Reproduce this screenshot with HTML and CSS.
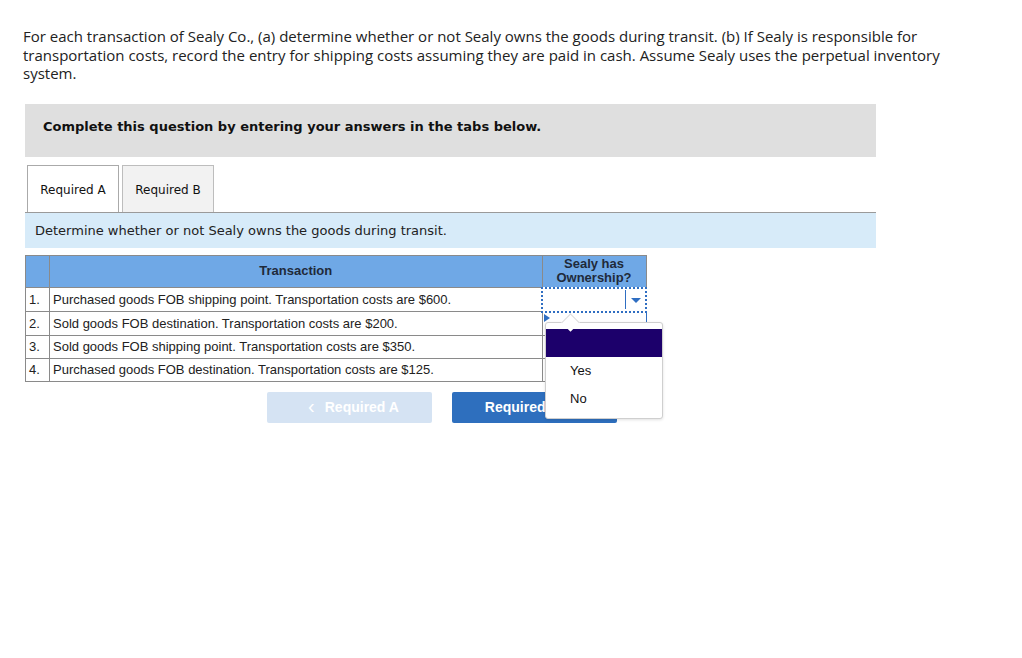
FILE: index.html
```html
<!DOCTYPE html>
<html>
<head>
<meta charset="utf-8">
<link rel="stylesheet" href="styles.css">
</head>
<body>
<p class="intro">For each transaction of Sealy Co., (a) determine whether or not Sealy owns the goods during transit. (b) If Sealy is responsible for transportation costs, record the entry for shipping costs assuming they are paid in cash. Assume Sealy uses the perpetual inventory system.</p>
<div class="wrap">
  <div class="banner">Complete this question by entering your answers in the tabs below.</div>
  <div class="tabs">
    <div class="tab active">Required A</div>
    <div class="tab">Required B</div>
  </div>
  <div class="instr">Determine whether or not Sealy owns the goods during transit.</div>
  <table class="grid">
    <thead>
      <tr><th class="num"></th><th class="desc">Transaction</th><th class="own">Sealy has<br>Ownership?</th></tr>
    </thead>
    <tbody>
      <tr><td class="num">1.</td><td class="desc">Purchased goods FOB shipping point. Transportation costs are $600.</td><td class="own sel focus"><div class="selbox"><span class="selval"></span><span class="selarrow"></span></div></td></tr>
      <tr><td class="num">2.</td><td class="desc">Sold goods FOB destination. Transportation costs are $200.</td><td class="own sel second"><span class="flag"></span></td></tr>
      <tr><td class="num">3.</td><td class="desc">Sold goods FOB shipping point. Transportation costs are $350.</td><td class="own"></td></tr>
      <tr><td class="num">4.</td><td class="desc">Purchased goods FOB destination. Transportation costs are $125.</td><td class="own"></td></tr>
    </tbody>
  </table>
  <div class="nav">
    <div class="btn prev"><span class="chev">&lsaquo;</span> Required A</div>
    <div class="btn next">Required B <span class="chev">&rsaquo;</span></div>
  </div>
</div>
<div class="popup">
  <div class="caret"></div>
  <div class="opt hl"></div>
  <div class="opt">Yes</div>
  <div class="opt">No</div>
</div>
</body>
</html>
```
FILE: styles.css
```css
html, body { margin: 0; padding: 0; background: #fff; }
body { font-family: "Open Sans", "Lato", sans-serif; color: #222; position: relative; width: 1022px; height: 658px; overflow: hidden; }

.intro {
  margin: 27px 0 0 23px;
  width: 925px;
  font-size: 15px;
  line-height: 18.5px;
  color: #222;
}

.wrap { margin: 21px 0 0 25px; width: 851px; }

.banner {
  background: #dfdfdf;
  height: 53px;
  box-sizing: border-box;
  padding: 15px 0 0 18px;
  font-family: "DejaVu Sans", Verdana, sans-serif;
  font-weight: bold;
  font-size: 13px;
  color: #111;
}

.tabs {
  display: flex;
  margin-top: 8px;
  padding-left: 2px;
  border-bottom: 1px solid #9a9a9a;
  height: 47px;
  gap: 3px;
}
.tab {
  width: 92px;
  height: 47px;
  box-sizing: border-box;
  border: 1px solid #bdbdbd;
  border-bottom: none;
  padding-top: 2px;
  background: #f2f2f2;
  font-family: "DejaVu Sans", Verdana, sans-serif;
  font-size: 12px;
  color: #111;
  display: flex;
  align-items: center;
  justify-content: center;
}
.tab.active { background: #fff; border-color: #aaa; }

.instr {
  background: #d7ebf9;
  height: 35px;
  box-sizing: border-box;
  padding: 10px 0 0 10px;
  font-family: "DejaVu Sans", Verdana, sans-serif;
  font-size: 13px;
  color: #222;
}

.grid {
  margin-top: 7px;
  border-collapse: collapse;
  width: 622px;
  font-family: "Liberation Sans", Arial, sans-serif;
  font-size: 13px;
  color: #222;
}
.grid th, .grid td { border: 1px solid #8a8a8a; padding: 0; }
.grid th {
  background: #6fa8e6;
  height: 31px;
  font-weight: bold;
  font-size: 13px;
  color: #1f2a3a;
  line-height: 14px;
}
.grid td { height: 22px; }
.grid .num { width: 24px; padding-left: 3px; text-align: left; box-sizing: border-box; }
.grid td.desc { padding-left: 3px; }
.grid .own { width: 102px; position: relative; }

.grid td.sel.focus { border: 2px dotted #2f6ec2; }
.selbox { display: flex; height: 19px; }
.selval { flex: 1; }
.selarrow {
  width: 19px;
  border-left: 1px solid #2f6ec2;
  position: relative;
}
.selarrow::after {
  content: "";
  position: absolute;
  left: 5px; top: 8px;
  border-left: 5px solid transparent;
  border-right: 5px solid transparent;
  border-top: 5px solid #2f6ec2;
}
.grid td.second { border-top-color: #2f6ec2; border-right: 1px solid #2f6ec2; }
.flag {
  position: absolute;
  left: 1px; top: 1px;
  border-top: 4px solid transparent;
  border-bottom: 4px solid transparent;
  border-left: 6px solid #2f6ec2;
}

.nav {
  display: flex;
  gap: 20px;
  margin: 10px 0 0 242px;
}
.btn {
  width: 165px;
  height: 31px;
  border-radius: 2px;
  font-family: "Liberation Sans", Arial, sans-serif;
  font-weight: bold;
  font-size: 14px;
  color: #fff;
  display: flex;
  align-items: center;
  justify-content: center;
}
.btn .chev { font-size: 20px; font-weight: normal; margin: 0 10px 0 8px; line-height: 1; position: relative; top: -1px; }
.btn.prev { background: #d5e3f3; }
.btn.next { background: #2e6fbe; }

.popup {
  position: absolute;
  left: 545px;
  top: 322px;
  width: 118px;
  height: 97px;
  box-sizing: border-box;
  background: #fff;
  border: 1px solid #cfcfcf;
  border-radius: 3px;
  box-shadow: 0 1px 3px rgba(0,0,0,0.12);
  padding-top: 6px;
  font-family: "Liberation Sans", Arial, sans-serif;
  font-size: 13px;
  color: #111;
}
.caret {
  position: absolute;
  left: 18px;
  top: -7px;
  width: 12px; height: 12px;
  background: #fff;
  border-left: 1px solid #dcdcdc;
  border-top: 1px solid #dcdcdc;
  transform: rotate(45deg);
}
.opt {
  height: 28px;
  line-height: 28px;
  padding-left: 24px;
}
.opt.hl { background: #1c006b; }
```
